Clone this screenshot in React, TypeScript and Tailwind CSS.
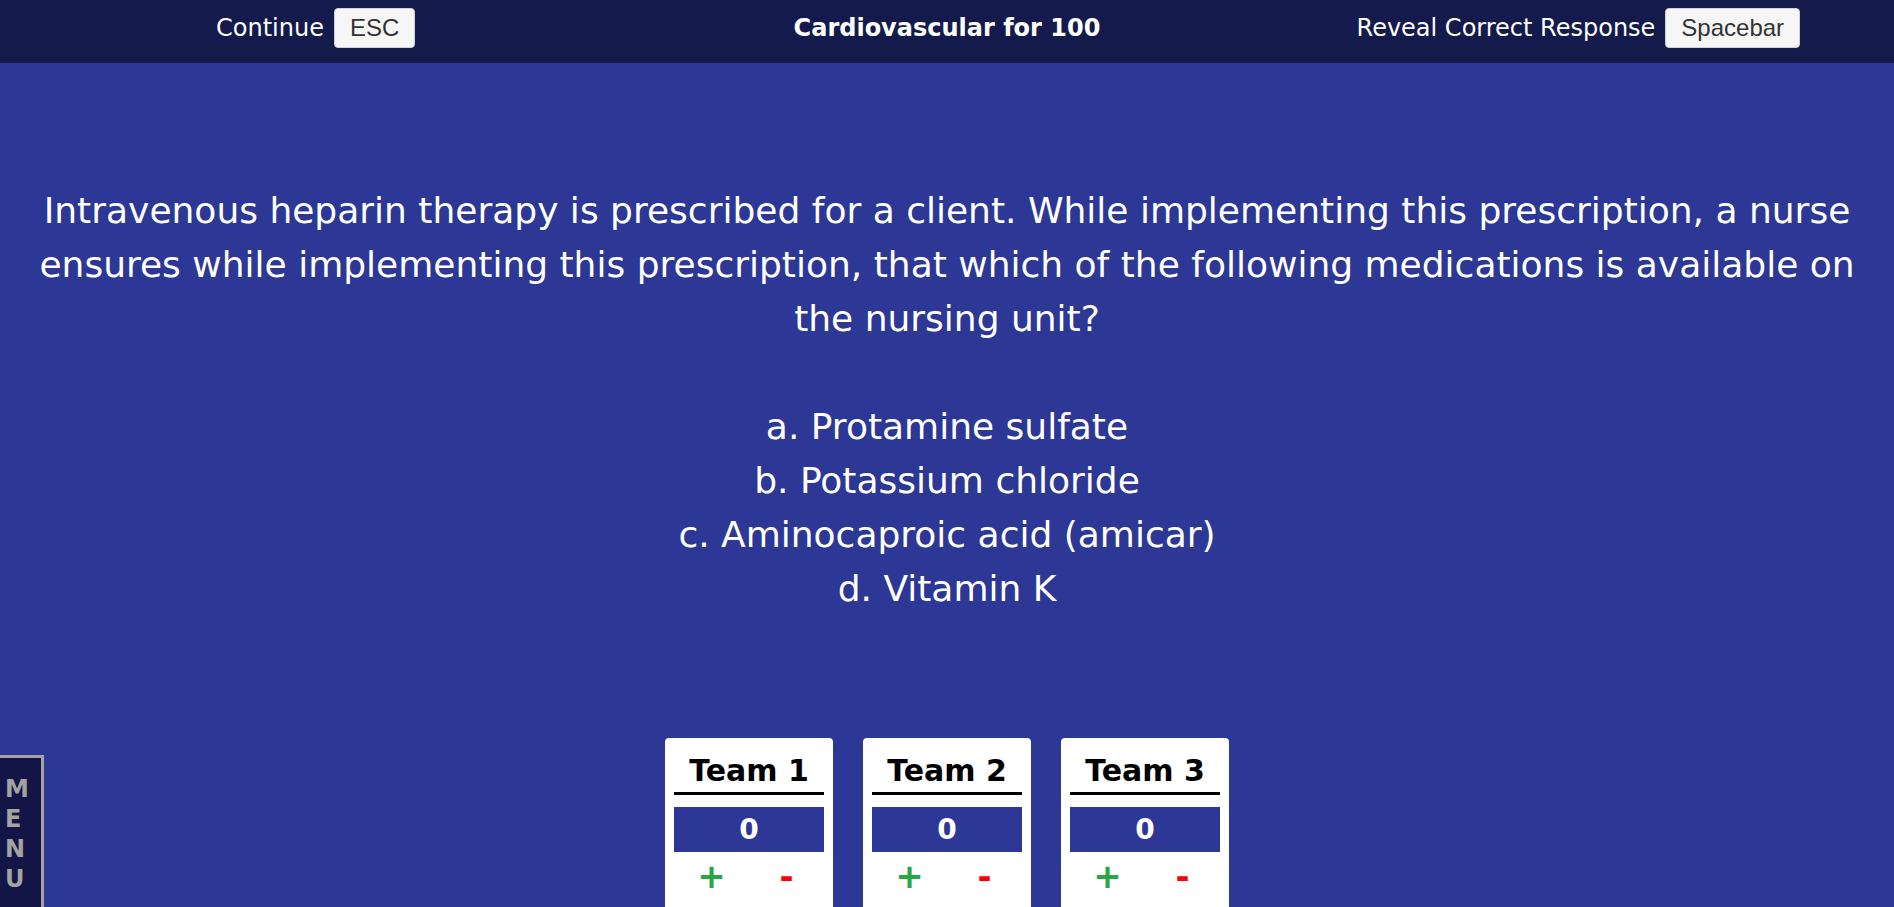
import React from "react";

const teams = ["Team 1", "Team 2", "Team 3"];

const options = [
  "a. Protamine sulfate",
  "b. Potassium chloride",
  "c. Aminocaproic acid (amicar)",
  "d. Vitamin K",
];

function KeyButton({ label }: { label: string }) {
  return (
    <span className="inline-flex items-center h-[40px] px-[15px] rounded-[4px] border border-[#d0d0d0] bg-[#f6f6f6] text-[#333] text-[24px] font-['Liberation_Sans',Arial,sans-serif]">
      {label}
    </span>
  );
}

function TeamCard({ name }: { name: string }) {
  return (
    <div className="w-[168px] h-[200px] bg-white rounded-[4px] px-[9px] pt-[15px]">
      <div className="text-center text-black font-bold text-[30px] leading-[36px] pb-[3px] border-b-[3px] border-black">
        {name}
      </div>
      <div className="mt-[12px] h-[45px] bg-[#2c3796] flex items-center justify-center text-white font-bold text-[28px]">
        0
      </div>
      <div className="grid grid-cols-2 text-center font-bold text-[34px] leading-[48px]">
        <span className="text-[#28a745]">+</span>
        <span className="text-[#ff0000]">-</span>
      </div>
    </div>
  );
}

export default function App() {
  return (
    <div className="relative h-[907px] overflow-hidden bg-[#2c3796] text-white font-['DejaVu_Sans',Verdana,sans-serif]">
      {/* top bar */}
      <div className="h-[63px] pb-[7px] bg-[#141a4c] grid grid-cols-3 items-center text-[24px]">
        <div className="flex items-center justify-center gap-[10px]">
          <span>Continue</span>
          <KeyButton label="ESC" />
        </div>
        <div className="text-center font-bold">Cardiovascular for 100</div>
        <div className="flex items-center justify-center gap-[10px]">
          <span>Reveal Correct Response</span>
          <KeyButton label="Spacebar" />
        </div>
      </div>

      {/* question */}
      <div className="pt-[121px] px-[36px] text-center text-[36px] leading-[54px]">
        <p>
          Intravenous heparin therapy is prescribed for a client. While implementing this prescription, a nurse
          ensures while implementing this prescription, that which of the following medications is available on
          the nursing unit?
        </p>
        <div className="mt-[54px]">
          {options.map((o) => (
            <div key={o}>{o}</div>
          ))}
        </div>
      </div>

      {/* scoreboard */}
      <div className="mt-[122px] flex justify-center gap-[30px]">
        {teams.map((t) => (
          <TeamCard key={t} name={t} />
        ))}
      </div>

      {/* menu tab */}
      <div className="absolute left-0 top-[755px] w-[44px] h-[160px] bg-[#121545] border-t-[3px] border-r-[3px] border-[#a3a3a3] pl-[5px] pt-[16px] text-[#a3a3a3] font-bold text-[24px] leading-[30px]">
        {"MENU".split("").map((c) => (
          <div key={c}>{c}</div>
        ))}
      </div>
    </div>
  );
}
